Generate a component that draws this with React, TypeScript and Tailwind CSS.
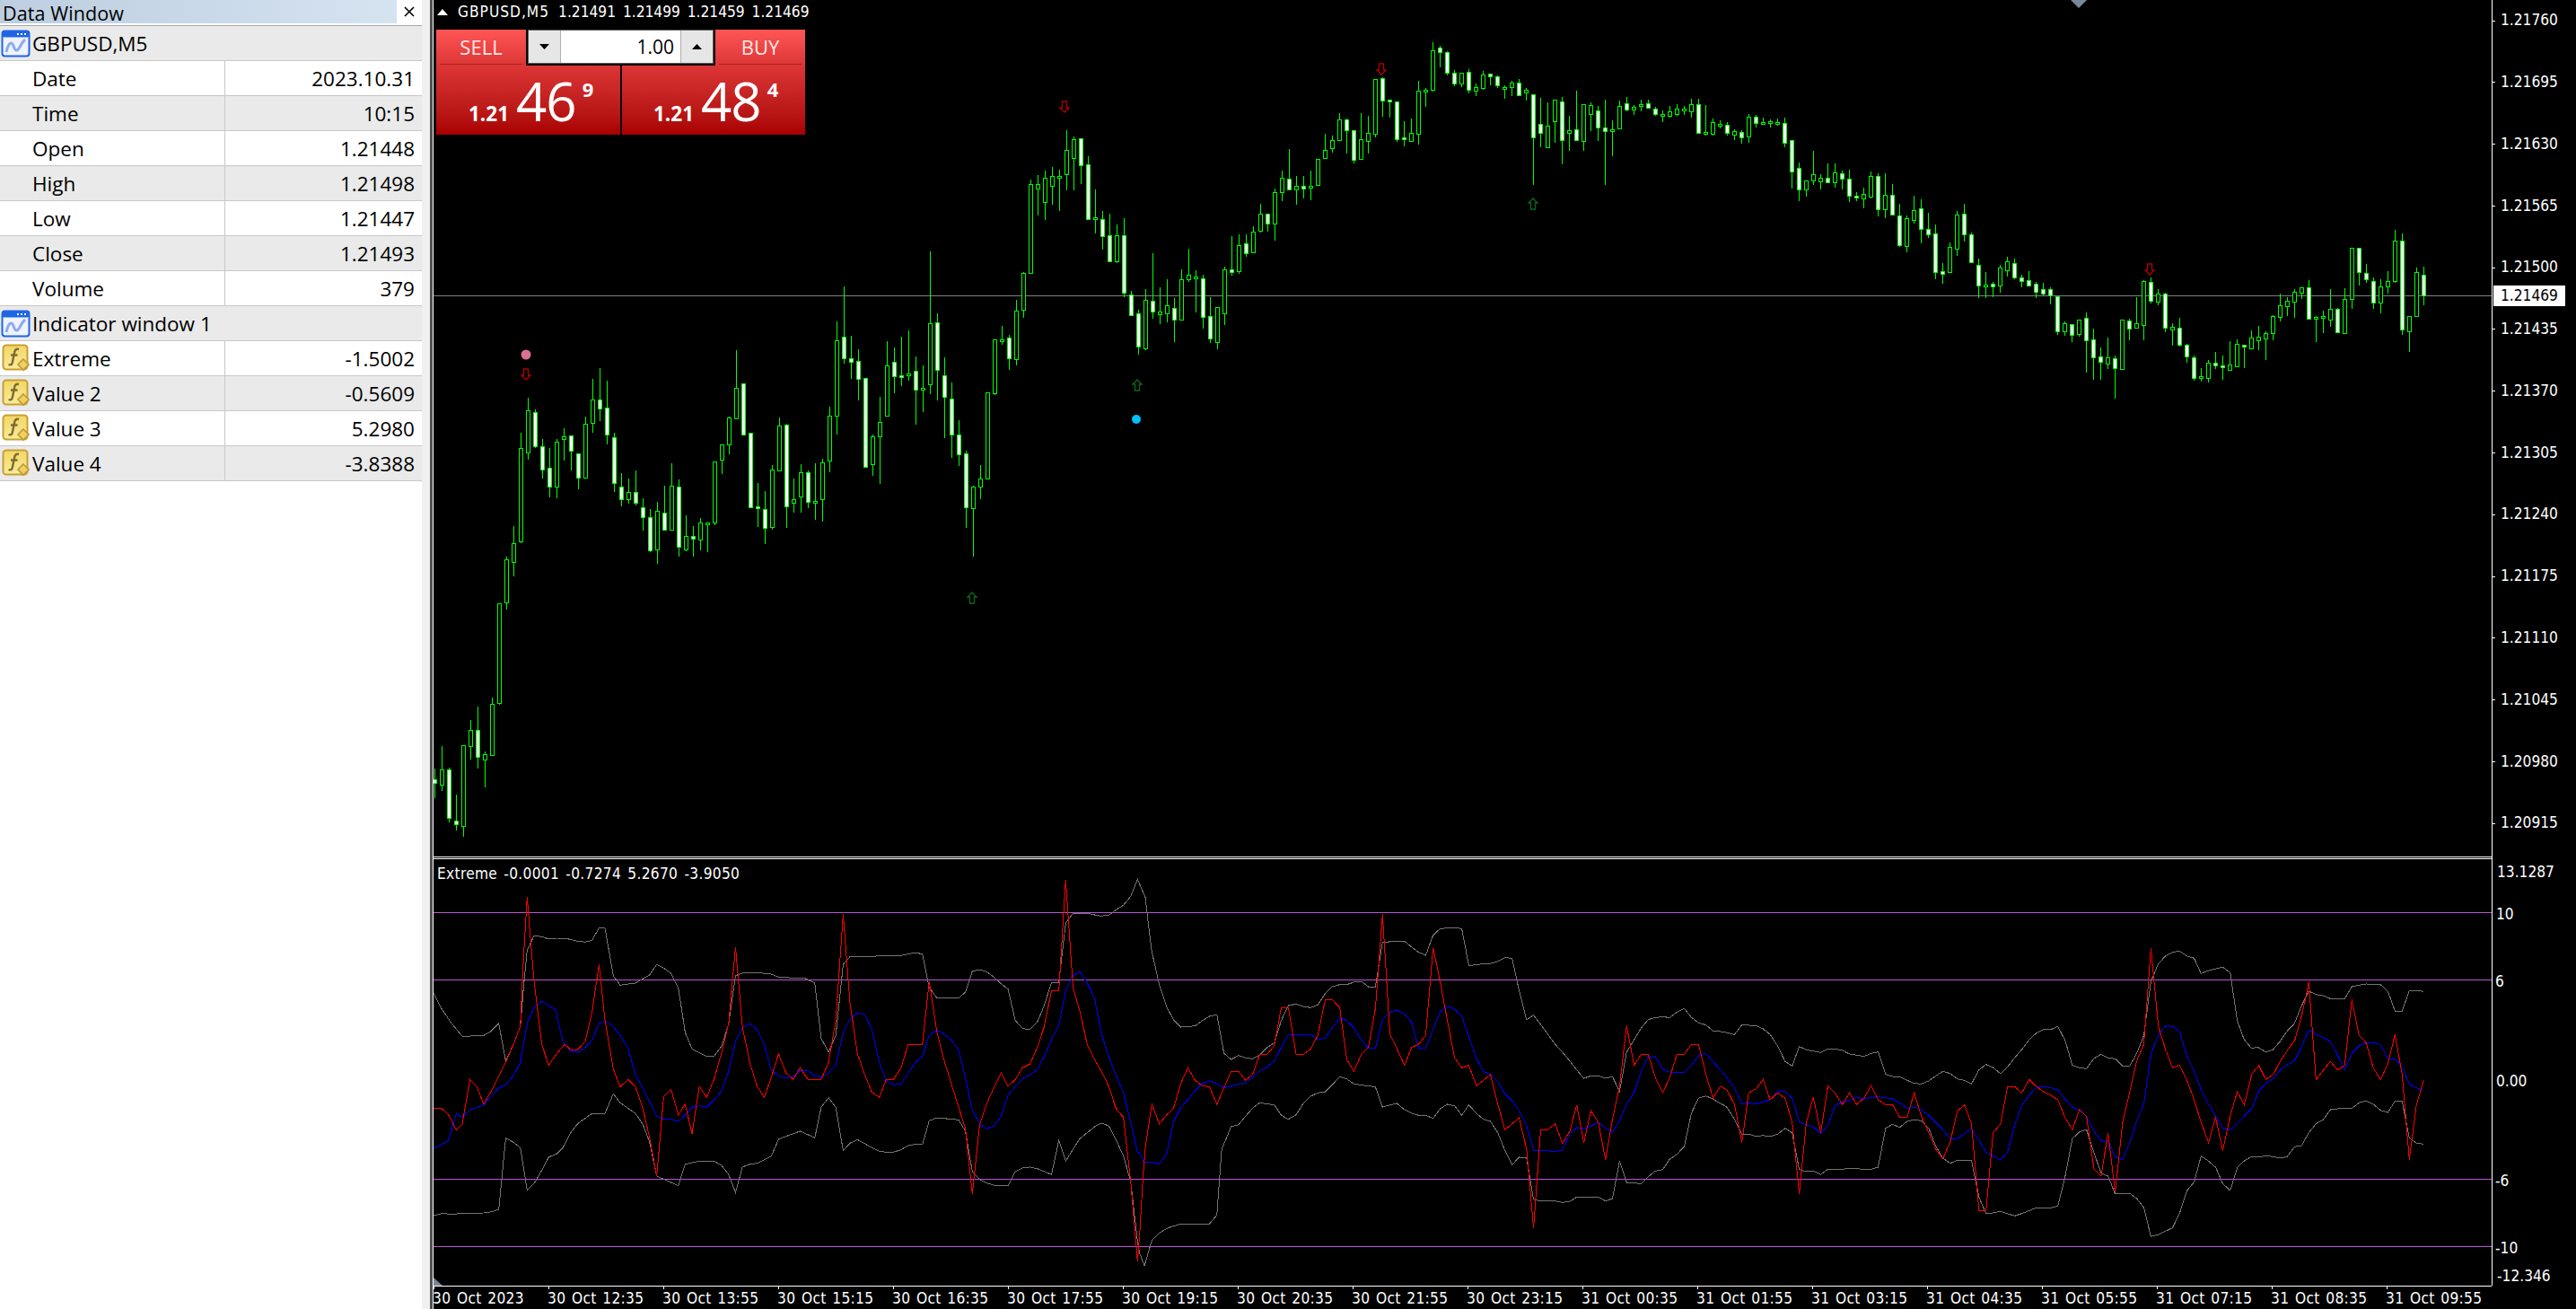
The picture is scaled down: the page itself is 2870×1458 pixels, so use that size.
import React from "react";

type B = number[];
// Candles: [bodyTop, bodyBottom, wickTop, wickBottom, white], y values in source rows of 1/3 px
const sec = (y0: number, list: B[]) => list.map(([a, b, c, d, w]) => [y0 + a / 3, y0 + b / 3, y0 + c / 3, y0 + d / 3, w]);
const candles: number[][] = [
  ...sec(700, [[503,517,468,567,1],[472,521,393,543,0],[470,632,465,648,1],[643,653,555,675,1],[391,659,391,696,0],[340,392,306,438,0],[340,430,261,468,1],[421,437,411,531,0],[253,422,232,422,0]]),
  ...sec(300, [[1117,1449,1117,1455,0],[970,1114,960,1136,0],[916,977,858,1026,0],[596,910,546,914,0],[472,613,430,636,0],[476,590,468,596,1],[590,670,568,698,1],[662,727,598,762,1],[577,725,568,765,0],[559,566,531,640,0],[554,607,554,672,1],[614,697,614,735,1],[517,697,492,698,0],[436,512,366,546,0],[434,466,331,507,1],[461,553,373,585,1],[560,715,546,744,1],[725,769,682,792,1],[745,767,699,783,0],[743,781,672,789,1],[794,829,766,873,1],[829,940,801,944,1],[808,937,778,983,0],[812,871,723,873,1],[722,871,648,872,0],[725,928,702,960,1],[890,937,822,941,0],[890,901,858,960,1],[845,904,832,939,0],[845,846,845,945,0],[641,845,641,855,0],[586,637,584,684,0],[496,586,493,618,0],[397,499,270,499,0],[380,551,380,555,1],[545,796,545,798,1],[791,799,714,861,1],[800,865,741,918,1],[670,862,655,870,0],[521,673,496,674,0],[520,793,517,864,1],[767,781,699,812,0],[677,760,652,812,0],[677,778,673,798,1],[775,781,648,837,0],[644,767,632,843,0],[490,640,460,678,0],[238,490,174,552,0],[224,298,57,315,1],[296,310,222,366,1],[305,367,267,438,1],[362,659,362,662,1],[559,652,552,690,0],[509,559,427,717,0],[322,490,240,492,0],[308,358,262,414,1],[355,361,225,390,1],[349,355,205,372,0],[338,403,292,519,1],[397,403,322,477,0],[181,385,-60,417,0],[176,337,148,438,1],[353,427,294,564,1],[431,553,378,630,1],[551,619,504,657,1],[614,796,607,864,1],[727,799,724,960,0],[698,725,655,768,0],[412,700,412,702,0],[235,413,235,420,0],[235,236,190,252,0],[229,298,220,335,1],[139,301,102,320,0],[13,136,8,161,0],[-285,13,-300,13,0],[-285,-270,-315,-180,0],[-306,-225,-330,-165,0]]),
  ...sec(40, [[469,500,438,564,0],[467,469,447,585,0],[382,461,316,516,0],[346,407,336,516,0],[343,431,343,496,1],[428,613,403,614,1],[606,611,514,660,0],[611,668,586,714,1],[667,754,595,754,1],[667,752,630,759,0],[667,857,610,873,1],[863,932,852,932,1],[928,1037,915,1065,1],[883,1043,847,1050,0],[884,920,726,945,1],[922,929,840,963,0],[901,926,813,957,0],[910,947,877,1023,1],[814,947,781,947,0],[799,812,712,822,0],[804,806,784,924,0],[809,938,799,978,1],[937,1010,874,1026,1],[907,1022,907,1047,0],[781,926,771,966,0],[779,788,670,801,1],[700,785,664,795,0],[694,725,664,738,1],[655,722,637,726,0],[595,650,562,657,0],[595,626,595,654,1],[523,626,510,684,0],[475,521,450,552,0],[478,513,378,516,1],[502,512,468,564,0],[502,509,468,543,1],[502,507,450,549,0],[412,497,412,498,0],[382,407,327,408,0],[349,376,333,390,0],[280,347,258,351,0],[280,316,276,393,1],[316,413,316,426,1],[346,410,258,413,0],[325,350,267,393,0],[145,326,145,338,0],[142,215,138,270,1],[212,220,212,273,1],[220,344,220,354,1],[340,346,285,369,1],[325,350,276,350,0],[184,326,150,362,0],[181,185,175,237,0],[49,179,21,186,0],[38,55,34,105,1],[55,122,52,132,1],[124,160,114,168,1],[124,158,122,171,0],[121,179,111,192,1],[172,182,159,201,0],[130,173,117,179,0],[127,134,127,165,1],[134,166,132,173,1],[172,178,165,209,0],[157,170,150,201,0],[157,197,144,201,1],[181,188,174,216,0],[196,338,196,497,1],[295,325,207,372,1],[301,371,222,372,0],[214,284,214,357,0],[220,347,205,429,1],[316,323,267,384,0],[313,349,183,350,1],[229,350,229,384,0],[232,260,222,318,0],[250,307,234,351,1],[305,319,213,497,1],[313,316,282,402,0],[235,308,217,308,0],[226,245,205,251,1],[238,245,232,264,0],[229,235,213,252,0],[226,239,213,243,1],[244,260,236,267,1],[262,266,250,288,0],[253,266,235,273,0],[244,260,228,267,0]]),
  ...sec(100, [[62,66,55,84,0],[49,71,30,93,0],[49,143,30,143,1],[142,147,51,152,0],[109,146,96,152,0],[113,115,102,129,0],[118,143,109,153,1],[139,149,132,167,0],[142,158,135,180,1],[91,155,82,177,0],[91,110,84,126,1],[109,111,93,117,0],[104,110,99,126,0],[109,114,96,120,0],[112,176,93,192,1],[169,272,169,330,1],[262,332,244,372,1],[304,332,304,357,0],[283,302,204,318,0],[295,305,282,333,0],[295,308,246,312,1],[277,308,246,327,0],[280,296,270,333,1],[298,353,267,375,1],[355,361,342,372,1],[348,362,327,396,0],[289,356,273,363,0],[289,398,279,423,1],[351,398,279,429,0],[352,418,315,418,1],[421,518,381,525,1],[430,521,420,543,0],[403,434,354,447,0],[397,464,366,513,1],[466,482,411,495,1],[481,610,450,633,1],[607,614,579,648,1],[526,608,510,608,0],[418,530,405,555,0],[415,482,381,507,1],[484,575,477,575,1],[586,653,564,696,1],[651,653,609,696,0],[649,656,642,693,1],[595,653,586,678,0],[574,602,558,624,0],[580,626,564,633,1],[628,640,618,660,1],[637,653,606,655,1],[649,674,642,696,1],[667,680,645,687,1],[667,687,660,717,1],[689,806,689,819,1],[781,806,774,822,0],[784,818,784,843,1],[769,815,769,825,0],[763,836,744,945,1],[835,893,798,969,1],[892,908,861,969,1],[895,914,828,933,0],[898,929,888,1032,1],[769,932,769,932,0],[772,797,765,837,1],[781,794,693,798,0],[640,785,636,837,0],[643,704,627,714,1],[682,707,666,720,0],[682,796,679,810,1],[793,800,780,855,0],[796,851,762,858,1],[853,892,849,912,1],[895,964,888,972,1],[958,962,930,975,0],[913,964,904,978,0],[913,922,876,933,1],[920,928,888,969,1],[919,935,840,939,0],[850,923,835,923,0],[851,859,851,930,1],[829,863,804,867,0],[826,836,789,870,0],[814,830,808,903,0],[757,812,754,837,0],[721,758,682,774,0],[706,722,693,756,0],[676,707,667,762,0],[661,677,661,699,0]]),
  ...sec(0, [[961,1066,936,1066,1],[1060,1066,1056,1143,0],[1057,1063,1038,1112,0],[1033,1069,966,1092,0],[1033,1110,1030,1112,1],[1000,1112,964,1112,0],[829,1000,829,1032,0],[829,910,829,954,1],[913,934,882,945,1],[940,1010,928,1032,1],[958,1010,934,1048,0],[940,958,906,982,0],[805,940,768,946,0],[805,1102,780,1119,1],[1057,1108,1057,1176,0],[910,1055,895,1058,0],[919,988,891,1020,1]]),
];

const seg = (x0: number, xs: number, y0: number, p: number[]) => {
  const out: string[] = [];
  for (let i = 0; i < p.length; i += 2) out.push(`${(x0 + p[i] / xs - 483).toFixed(1)},${(y0 + p[i + 1] / 3 - 957).toFixed(1)}`);
  return out;
};
const line = (a: number[], b: number[], c: number[], d: number[]) =>
  [...seg(470, 1.96, 950, a), ...seg(1270, 2.412, 990, b), ...seg(1920, 2.412, 990, c), ...seg(2500, 3, 940, d)].join(" ");

const red = line(
  [25,853,43,853,58,875,75,925,88,907,105,757,120,780,135,840,150,800,168,745,183,700,200,640,215,580,222,350,230,148,245,430,262,640,277,710,295,670,312,640,325,657,340,657,357,630,372,530,387,372,400,560,418,722,433,782,450,757,466,780,482,850,497,950,513,1080,528,815,544,790,560,875,575,840,590,938,606,780,622,817,638,757,655,665,670,570,685,315,700,580,716,700,732,780,748,817,763,750,779,672,795,735,811,757,826,717,843,757,872,757,888,700,904,560,920,205,935,500,951,670,967,740,983,800,999,817,1014,757,1030,757,1046,720,1062,640,1093,640,1108,430,1125,600,1140,690,1156,770,1172,850,1187,920,1202,1140,1218,910,1233,840,1249,785,1265,735,1280,780,1296,757,1312,717,1328,705,1344,650,1359,580,1375,460,1391,460,1406,90,1422,450,1437,530,1453,640,1469,690,1484,730,1500,780,1516,855,1532,883,1548,1100,1563,1365],
  [0,1140,8,970,15,860,32,720,52,785,72,755,90,735,110,650,129,598,148,640,168,658,187,662,207,720,226,665,245,610,265,610,284,640,303,620,322,553,342,553,361,525,380,397,399,397,410,480,420,553,440,553,459,535,478,490,498,370,517,370,537,397,556,570,575,610,595,553,614,530,633,400,652,85,672,487,691,535,711,590,730,530,749,520,768,490,788,197,807,310,826,440,846,565,865,598,884,590,904,658,923,640,942,620,962,720,981,805,1000,785,1019,765,1039,870,1058,1133,1077,805,1096,805,1116,785,1135,850,1155,810,1174,722,1193,848,1212,742,1232,780,1251,905,1270,770,1289,660,1308,457,1328,590,1347,553,1366,553,1385,630,1405,682,1424,630,1443,553,1463,553,1482,520,1501,520,1521,620,1540,698,1560,660],
  [0,665,10,672,30,720,50,848,68,682,88,668,107,637,126,705,146,682,166,700,185,780,204,1020,223,780,242,697,262,815,281,658,300,682,320,722,339,682,358,720,378,700,397,658,416,705,436,722,455,722,474,763,494,763,513,682,532,760,552,815,571,870,590,902,610,845,629,742,648,722,667,785,687,1075,706,1075,725,815,745,785,764,661,783,661,802,682,822,637,841,660,860,678,880,690,899,705,918,763,938,805,957,738,976,760,996,935,1015,960,1034,817,1053,1015,1073,780,1092,680,1111,575,1130,520,1149,197,1169,460,1188,535,1207,598,1226,590,1246,640,1265,705,1284,780,1304,848,1323,763,1342,875,1362,760,1381,678,1400,722,1420,620,1439,590,1458,637,1478,620,1497,575,1516,540,1536,505,1555,420,1567,350],
  [217,460,241,788,265,757,289,727,313,755,337,740,361,520,385,640,409,665,433,750,457,788,481,735,505,637,529,770,553,1055,577,870,601,790]
);
const blue = line(
  [25,988,43,975,58,960,75,872,88,883,105,860,120,850,135,842,150,815,168,785,183,775,200,745,215,700,230,570,245,515,262,495,277,510,292,525,308,630,325,662,340,667,357,650,372,625,387,570,400,562,418,580,433,610,450,650,466,740,482,785,497,830,513,880,528,890,544,890,560,897,575,877,590,850,606,845,622,850,638,825,655,795,670,730,685,630,700,585,716,570,732,590,748,640,763,725,779,745,795,752,811,748,826,727,843,727,858,745,872,748,888,735,904,710,920,600,935,555,951,535,967,540,983,590,999,700,1014,760,1030,775,1046,772,1062,735,1078,700,1093,680,1108,610,1125,592,1140,605,1156,625,1172,660,1187,750,1202,860,1218,905,1233,922,1249,913,1265,880,1280,810,1296,780,1312,755,1328,740,1344,725,1359,680,1375,625,1391,575,1406,460,1422,410,1437,397,1453,435,1469,485,1484,605,1500,680,1516,745,1532,800,1548,900,1563,1000],
  [0,885,12,915,32,912,52,920,72,885,90,780,110,730,129,705,148,675,168,650,187,641,207,652,226,665,245,660,265,652,284,648,303,630,322,608,342,595,361,575,380,530,399,487,459,487,478,505,498,498,517,465,537,432,556,440,575,465,595,505,614,532,633,532,652,437,672,412,691,405,711,418,730,445,749,532,768,532,788,470,807,410,826,392,846,403,865,425,884,495,904,565,923,610,942,620,962,645,981,685,1000,708,1019,740,1039,790,1058,873,1077,873,1116,878,1135,873,1155,820,1174,797,1193,803,1212,792,1232,780,1251,800,1270,813,1289,775,1308,720,1328,680,1347,610,1366,563,1385,560,1405,603,1424,613,1463,613,1482,590,1501,558,1521,550,1540,578,1560,605],
  [0,615,30,665,50,718,68,716,88,718,126,705,146,677,166,677,185,700,204,778,223,790,242,795,262,818,281,790,300,725,320,712,339,708,358,695,378,703,397,697,416,695,455,702,474,715,494,733,513,730,532,738,552,757,571,780,590,805,610,835,629,835,648,818,667,802,687,840,706,880,725,893,745,906,764,880,783,790,802,725,822,690,841,663,860,661,880,665,899,672,918,702,938,730,957,740,976,760,996,810,1015,842,1034,845,1053,895,1073,905,1092,850,1111,775,1130,720,1149,550,1169,490,1188,458,1207,460,1226,477,1246,560,1265,610,1284,670,1304,720,1323,760,1342,800,1362,807,1381,785,1400,760,1420,735,1439,675,1458,650,1478,635,1497,605,1516,588,1536,573,1555,525,1567,490],
  [217,622,241,635,265,647,289,660,313,705,337,755,361,700,385,675,409,665,433,663,457,672,481,718,505,718,529,745,553,802,577,815,601,825]
);
const upper = line(
  [25,468,43,520,65,570,88,612,105,612,135,610,150,597,168,570,183,695,200,640,215,580,222,450,230,325,245,277,262,280,277,288,295,285,312,285,340,295,357,298,372,292,387,250,400,252,418,410,433,442,450,438,466,435,497,408,513,373,528,385,544,402,560,450,575,600,590,655,606,668,622,680,638,680,655,645,670,570,685,410,700,402,732,400,763,405,779,415,811,418,835,418,858,435,872,620,888,665,904,610,920,372,935,347,983,347,999,343,1046,343,1062,338,1078,333,1093,338,1108,450,1125,485,1172,485,1187,465,1202,395,1218,390,1233,397,1249,415,1265,437,1280,455,1296,560,1312,587,1328,590,1344,565,1359,510,1375,433,1391,433,1406,235,1422,202,1453,202,1469,207,1484,211,1500,208,1516,190,1532,175,1548,145,1563,88],
  [15,30,20,90,32,210,52,320,72,395,90,437,110,462,148,458,168,440,187,426,207,420,226,550,245,570,265,557,284,565,303,568,322,555,342,530,361,515,380,440,399,390,420,385,440,393,459,397,478,388,498,350,517,327,537,320,556,320,575,312,595,310,614,327,633,327,652,178,711,175,730,195,749,212,768,222,788,155,807,133,846,130,865,133,884,257,904,253,942,250,962,242,981,230,1000,232,1019,340,1039,437,1058,422,1077,453,1116,520,1135,545,1155,575,1174,605,1193,633,1212,625,1232,625,1251,633,1270,628,1289,677,1308,545,1328,505,1347,465,1366,437,1385,430,1405,428,1424,430,1443,412,1463,400,1482,430,1501,447,1521,455,1540,475,1560,477],
  [0,478,30,487,50,455,88,457,107,468,126,487,146,525,166,577,185,592,204,527,223,538,262,547,281,535,300,535,320,540,339,552,378,560,397,550,416,545,436,620,455,627,474,628,494,640,513,650,532,652,552,642,571,625,590,610,610,617,629,635,648,640,667,652,687,605,706,587,725,597,745,618,764,595,783,565,802,537,822,505,841,482,860,470,880,470,899,460,918,505,938,590,957,598,976,601,996,567,1015,553,1034,565,1053,568,1073,592,1092,592,1111,550,1130,490,1149,310,1169,250,1188,225,1207,212,1226,208,1246,225,1265,232,1284,283,1304,273,1342,262,1362,280,1381,440],
  [0,652,25,682,48,680,73,695,97,688,121,660,145,625,169,600,193,540,217,492,241,503,265,507,289,517,337,517,361,477,385,472,409,468,457,470,481,492,505,558,529,558,553,490,577,490,601,493]
);
const lower = line(
  [25,1212,43,1205,65,1207,88,1205,135,1203,150,1200,168,1192,183,953,200,967,215,985,230,1127,245,1105,262,1060,277,1017,295,1005,308,985,325,935,340,905,372,870,400,870,418,805,433,835,466,870,482,905,497,965,513,1080,528,1090,560,1112,575,1040,606,1030,638,1030,655,1045,670,1075,685,1135,700,1050,716,1040,732,1037,763,1013,779,957,795,947,826,930,858,952,872,850,888,818,904,850,920,995,935,970,951,958,983,985,999,997,1014,1000,1030,1000,1046,992,1062,978,1078,973,1093,975,1108,895,1125,885,1172,892,1187,930,1202,1065,1218,1090,1233,1103,1249,1110,1280,1113,1296,1065,1312,1052,1328,1050,1344,1055,1375,1075,1391,960,1406,1030,1422,990,1437,955,1469,915,1484,903,1500,912,1516,960,1532,1012,1548,1100,1563,1300],
  [0,1220,12,1260,32,1175,52,1150,72,1135,90,1127,110,1120,148,1122,187,1120,207,1090,212,1000,220,870,245,795,265,788,284,760,303,733,322,715,361,722,380,757,399,770,420,755,440,715,459,693,478,682,498,678,517,655,537,628,556,635,575,652,633,662,652,730,672,722,691,717,711,738,730,750,749,757,768,757,788,767,807,735,826,720,846,725,865,757,884,722,904,750,923,770,942,777,962,815,981,875,1000,922,1019,897,1039,900,1058,1038,1077,1043,1116,1043,1135,1048,1155,1045,1174,1030,1232,1030,1251,1043,1270,1035,1289,910,1308,982,1347,985,1366,962,1385,943,1405,938,1424,903,1443,887,1463,860,1482,750,1501,700,1521,692,1540,703,1567,722],
  [0,722,10,730,30,770,50,820,68,820,88,827,107,824,126,828,146,820,166,800,185,815,204,938,223,945,242,943,262,955,281,937,320,937,339,934,378,937,397,937,416,930,436,800,455,787,474,797,494,777,513,772,532,775,552,800,571,860,590,900,610,917,629,907,667,907,687,1030,706,1085,725,1083,745,1078,783,1093,802,1085,841,1066,880,1066,899,1060,918,965,938,835,957,812,976,805,996,880,1015,950,1034,960,1053,1020,1092,1018,1111,1035,1130,1065,1149,1162,1169,1155,1207,1133,1226,1085,1246,1008,1265,980,1284,893,1304,910,1323,930,1342,985,1362,1008,1381,932],
  [0,1060,25,1045,48,1047,73,1042,97,1045,121,1050,145,1045,169,1012,193,1008,217,965,241,935,265,922,289,888,313,885,361,883,385,865,409,858,433,870,457,890,481,897,505,860,529,860,553,983,577,1000,601,1003]
);

const prices = ["1.21760","1.21695","1.21630","1.21565","1.21500","1.21435","1.21370","1.21305","1.21240","1.21175","1.21110","1.21045","1.20980","1.20915"];
const times = ["30 Oct 2023","30 Oct 12:35","30 Oct 13:55","30 Oct 15:15","30 Oct 16:35","30 Oct 17:55","30 Oct 19:15","30 Oct 20:35","30 Oct 21:55","30 Oct 23:15","31 Oct 00:35","31 Oct 01:55","31 Oct 03:15","31 Oct 04:35","31 Oct 05:55","31 Oct 07:15","31 Oct 08:35","31 Oct 09:55"];
const subAxis = [
  { t: "13.1287", c: "mt-[4px] pl-[5px]" },
  { t: "10", c: "mt-[27px] pl-[4px]" },
  { t: "6", c: "mt-[55px] pl-[3px]" },
  { t: "0.00", c: "mt-[91px] pl-[4px]" },
  { t: "-6", c: "mt-[91px] pl-[3px]" },
  { t: "-10", c: "mt-[55px] pl-[3px]" },
  { t: "-12.346", c: "mt-[11px] pl-[5px]" },
];

const mono = "font-['DejaVu_Sans_Condensed','DejaVu_Sans',sans-serif]";
const ui = "font-['Open_Sans',sans-serif]";

function WindowIcon() {
  return (
    <svg width="33" height="31" viewBox="0 0 33 31" className="shrink-0">
      <rect x="1.5" y="1.5" width="30" height="28" rx="3" fill="#eef3fd" stroke="#1f66e5" strokeWidth="2" />
      <rect x="1.5" y="1.5" width="30" height="7" rx="2" fill="#1f66e5" />
      <rect x="18" y="4" width="2" height="2" fill="#fff" />
      <rect x="22" y="4" width="2" height="2" fill="#fff" />
      <rect x="26" y="4" width="2" height="2" fill="#fff" />
      <path d="M6 25c2-9 5-12 7-9s2 8 5 7 4-8 9-12" fill="none" stroke="#8fa9ee" strokeWidth="3" />
    </svg>
  );
}

function FuncIcon() {
  return (
    <svg width="33" height="32" viewBox="0 0 33 32" className="shrink-0">
      <defs>
        <linearGradient id="fn" x1="0" y1="0" x2="0" y2="1">
          <stop offset="0" stopColor="#f2d765" />
          <stop offset="1" stopColor="#f9eb9c" />
        </linearGradient>
      </defs>
      <rect x="3.5" y="1.5" width="27" height="27" rx="3.5" fill="url(#fn)" stroke="#c8a030" strokeWidth="2" />
      <path d="M21 6c-3-1-4.500 1-5 4l-2 10c-.5 3-2 4-4.500 3M12 12.500h7.500" fill="none" stroke="#7d6c2e" strokeWidth="2.400" />
      <path d="M26 17l6 6-6 6-6-6z" fill="#f0d060" stroke="#bf9a38" strokeWidth="1.600" />
    </svg>
  );
}

function Row({ label, value, gray, icon }: { label: string; value?: string; gray?: boolean; icon?: "w" | "f" }) {
  const bg = gray ? "bg-[#eaeaea]" : "bg-white";
  return (
    <div className={`flex h-[39px] shrink-0 border-b border-[#c8c8c8] ${bg}`}>
      <div className={`flex h-full items-center ${value === undefined ? "w-full" : "w-[251px] border-r border-[#c8c8c8]"}`}>
        {icon === "w" ? <div className="ml-[1px] w-[35px] shrink-0"><WindowIcon /></div> : icon === "f" ? <div className="w-[36px] shrink-0"><FuncIcon /></div> : <div className="w-[36px] shrink-0" />}
        <span className="pt-[2px]">{label}</span>
      </div>
      {value !== undefined && <div className="flex flex-1 items-center justify-end pt-[2px] pr-[8px]">{value}</div>}
    </div>
  );
}

function Arrow({ x, y, up }: { x: number; y: number; up?: boolean }) {
  return (
    <path
      transform={`translate(${x} ${y}) ${up ? "scale(1 -1)" : ""}`}
      d="M-2.500 -6h5v7h2.500L0 6L-5 1h2.500z"
      fill="#000"
      stroke={up ? "#0a6a1a" : "#b00000"}
      strokeWidth="1.300"
    />
  );
}

function MainChart() {
  return (
    <svg width="2293" height="954" className="block" shapeRendering="crispEdges">
      <rect x="0" y="329" width="2293" height="1" fill="#808080" />
      {candles.map((k, i) => {
        const c = 1 + 8 * i;
        const t = Math.round(k[0]);
        const b = Math.max(Math.round(k[1]), t + 2);
        const wt = Math.round(k[2]);
        const wb = Math.round(k[3]);
        return (
          <g key={i}>
            <rect x={c} y={Math.min(wt, t)} width="1" height={Math.max(wb, b) - Math.min(wt, t)} fill="#00ff00" />
            <rect x={c - 1.5} y={t + 0.5} width="4" height={b - t} fill={k[4] ? "#ffffff" : "#000000"} stroke="#00ff00" strokeWidth="1" />
          </g>
        );
      })}
      <g shapeRendering="auto">
        <Arrow x={103} y={417} />
        <Arrow x={703} y={119} />
        <Arrow x={1056} y={77} />
        <Arrow x={1912} y={300} />
        <Arrow x={600} y={666} up />
        <Arrow x={784} y={429} up />
        <Arrow x={1225} y={227} up />
        <circle cx="103" cy="395" r="5.500" fill="#dc6f93" />
        <circle cx="783" cy="467" r="5" fill="#00bfff" />
      </g>
      <polygon points="1824,0 1842,0 1833,9" fill="#778899" shapeRendering="auto" />
    </svg>
  );
}

function SubChart() {
  return (
    <svg width="2293" height="475" className="block" shapeRendering="crispEdges">
      <rect x="0" y="59" width="2293" height="1" fill="#ba55d3" />
      <rect x="0" y="134" width="2293" height="1" fill="#ba55d3" />
      <rect x="0" y="356" width="2293" height="1" fill="#ba55d3" />
      <rect x="0" y="431" width="2293" height="1" fill="#ba55d3" />
      <polyline points={upper} fill="none" stroke="#747474" strokeWidth="1" />
      <polyline points={lower} fill="none" stroke="#747474" strokeWidth="1" />
      <polyline points={blue} fill="none" stroke="#0000ff" strokeWidth="1" />
      <polyline points={red} fill="none" stroke="#ff0000" strokeWidth="1" />
      <polygon points="0,466 10,475 0,475" fill="#778899" shapeRendering="auto" />
    </svg>
  );
}

function Triangle({ up }: { up?: boolean }) {
  return (
    <svg width="11" height="6" viewBox="0 0 11 6">
      <polygon points={up ? "5.500,0 11,6 0,6" : "0,0 11,0 5.500,6"} fill="#000" />
    </svg>
  );
}

function Price({ big, small, wide }: { big: string; small: string; wide: string }) {
  return (
    <div className={`relative flex flex-1 items-end ${wide} h-[77px] bg-gradient-to-b from-[#dc3535] to-[#a80000] pb-[9px] text-white`}>
      <span className="mb-[2px] text-[22.5px] leading-[24px] font-bold">1.21</span>
      <span className="ml-[8px] text-[60px] leading-[58px] tracking-[-1px]">{big}</span>
      <span className="mt-[14px] mb-[27px] ml-[7px] self-start text-[22px] leading-[24px] font-bold">{small}</span>
    </div>
  );
}

function TradePanel() {
  return (
    <div className={`absolute top-[33px] left-[3px] flex w-[411px] flex-col bg-black ${ui}`}>
      <div className="flex h-[40px] justify-between">
        <div className="flex w-[100px] flex-col bg-gradient-to-b from-[#ff5555] to-[#dc3535] px-[4px] text-center text-[22px] text-[#ffe8e8]">
          <span className="flex-1 leading-[38px]">SELL</span>
          <div className="h-px bg-[#a82020]" />
          <div className="h-px" />
        </div>
        <div className="flex h-[38px] w-[207px] border border-[#5a5a5a] bg-white text-black">
          <div className="flex w-[36px] items-center justify-center border-r border-[#b0b0b0] bg-[#e6e6e6]"><Triangle /></div>
          <div className="flex-1 pr-[7px] text-right text-[21px] leading-[36px]">1.00</div>
          <div className="flex w-[36px] items-center justify-center border-l border-[#b0b0b0] bg-[#e6e6e6]"><Triangle up /></div>
        </div>
        <div className="flex w-[100px] flex-col bg-gradient-to-b from-[#ff5555] to-[#dc3535] px-[4px] text-center text-[22px] text-[#ffe8e8]">
          <span className="flex-1 leading-[38px]">BUY</span>
          <div className="h-px bg-[#a82020]" />
          <div className="h-px" />
        </div>
      </div>
      <div className="flex gap-[2px]">
        <Price big="46" small="9" wide="pl-[36px]" />
        <Price big="48" small="4" wide="pl-[35px]" />
      </div>
    </div>
  );
}

export default function App() {
  return (
    <div className="flex h-[1458px] w-[2870px] overflow-hidden bg-black">
      <aside className={`flex h-full w-[470px] shrink-0 flex-col bg-white text-[22.5px] text-black ${ui}`}>
        <div className="flex h-[26px] shrink-0">
          <div className="w-[442px] bg-gradient-to-r from-[#bccee0] to-[#d6e3f1] pt-[3px] pl-[3px] text-[21.5px] leading-[23px] tracking-[0.1px]">Data Window</div>
          <div className="flex flex-1 items-center justify-center">
            <svg width="12" height="12" viewBox="0 0 12 12"><path d="M1 1l10 10M11 1L1 11" stroke="#000" strokeWidth="1.600" /></svg>
          </div>
        </div>
        <div className="h-[2px] shrink-0" />
        <div className="h-px shrink-0 bg-[#a8a8a8]" />
        <Row label="GBPUSD,M5" gray icon="w" />
        <Row label="Date" value="2023.10.31" />
        <Row label="Time" value="10:15" gray />
        <Row label="Open" value="1.21448" />
        <Row label="High" value="1.21498" gray />
        <Row label="Low" value="1.21447" />
        <Row label="Close" value="1.21493" gray />
        <Row label="Volume" value="379" />
        <Row label="Indicator window 1" gray icon="w" />
        <Row label="Extreme" value="-1.5002" icon="f" />
        <Row label="Value 2" value="-0.5609" gray icon="f" />
        <Row label="Value 3" value="5.2980" icon="f" />
        <Row label="Value 4" value="-3.8388" gray icon="f" />
      </aside>
      <div className="h-full w-[9px] shrink-0 bg-[#f0f0f0]" />
      <div className="h-full w-[3px] shrink-0 bg-[#505050]" />
      <div className="h-full w-px shrink-0 bg-white" />
      <main className={`flex h-full flex-1 flex-col text-[17.2px] text-white ${mono}`}>
        <div className="flex h-[954px] shrink-0">
          <div className="relative h-full w-[2293px] shrink-0 overflow-hidden">
            <MainChart />
            <div className="absolute top-[4px] left-[4px] flex items-center gap-[11px] leading-[18px]">
              <svg width="12" height="7" viewBox="0 0 12 7"><polygon points="6,0 12,7 0,7" fill="#fff" /></svg>
              <span className="tracking-[1px]">GBPUSD,M5</span>
              <span className="-ml-[1px] [word-spacing:3px]">1.21491 1.21499 1.21459 1.21469</span>
            </div>
            <TradePanel />
          </div>
          <div className="relative h-full flex-1 overflow-hidden border-l border-white">
            <div className="-mt-[11.4px] flex flex-col">
              {prices.map((p) => (
                <div key={p} className="flex h-[68.8px] items-center">
                  <div className="h-px w-[3px] bg-white" />
                  <span className="ml-[6px]">{p}</span>
                </div>
              ))}
            </div>
            <div className="absolute top-[318px] left-[1px] flex h-[23px] w-[80px] items-center bg-white pl-[8px] text-black">1.21469</div>
          </div>
        </div>
        <div className="flex h-[3px] shrink-0">
          <div className="flex h-full w-[2293px] shrink-0 flex-col justify-between">
            <div className="h-px bg-white" />
            <div className="h-px bg-white" />
          </div>
          <div className="flex-1 border-l border-white" />
        </div>
        <div className="flex h-[475px] shrink-0">
          <div className="relative h-full w-[2293px] shrink-0 overflow-hidden">
            <SubChart />
            <div className="absolute top-[7px] left-[4px] leading-[18px] tracking-[0.3px] [word-spacing:2px]">Extreme -0.0001 -0.7274 5.2670 -3.9050</div>
          </div>
          <div className="flex h-full flex-1 flex-col border-l border-white">
            {subAxis.map((a) => (
              <div key={a.t} className={`h-[20px] leading-[20px] ${a.c}`}>{a.t}</div>
            ))}
          </div>
        </div>
        <div className="flex flex-1">
          <div className="flex w-[2293px] shrink-0 border-t border-white">
            {times.map((t) => (
              <div key={t} className="w-[128px] shrink-0 pt-[4px] leading-[18px]">
                <div className="absolute -mt-[4px] h-[3px] w-px bg-white" />
                <span className="-ml-[1px] block tracking-[0.3px] whitespace-nowrap [word-spacing:1.5px]">{t}</span>
              </div>
            ))}
          </div>
        </div>
      </main>
    </div>
  );
}
